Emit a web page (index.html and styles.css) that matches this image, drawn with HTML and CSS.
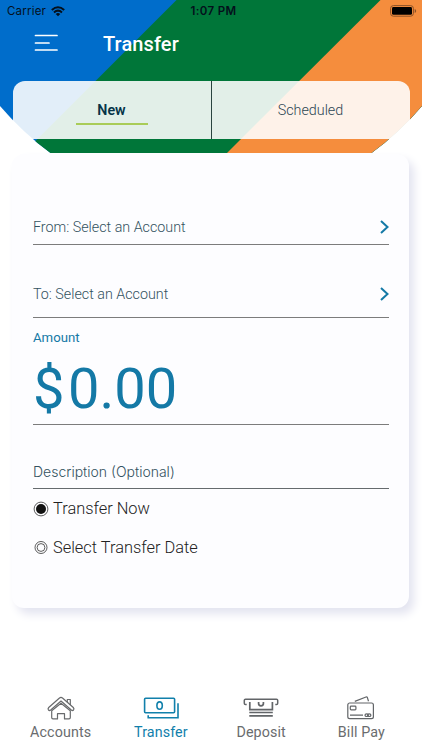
FILE: index.html
```html
<!DOCTYPE html>
<html lang="en">
<head>
<meta charset="utf-8">
<title>Transfer</title>
<link rel="stylesheet" href="styles.css">
</head>
<body>
<div class="app">
  <header class="header">
    <svg class="backdrop" width="422" height="153" viewBox="0 0 422 153">
      <clipPath id="curve"><path d="M0 0H422V106Q399 133 371.500 153H50.500Q23 133 0 106Z"/></clipPath>
      <g clip-path="url(#curve)">
        <path fill="#006dcb" d="M0 0H422V153H0Z"/>
        <path fill="#007639" d="M176.500 0H422V153H23.500Z"/>
        <path fill="#f58d3d" d="M380.500 0H422V153H227Z"/>
      </g>
    </svg>
    <div class="status">
      <div class="carrier"><span>Carrier</span>
        <svg width="14" height="11" viewBox="0 0 14 11" fill="none" stroke="#04101c" stroke-width="2"><path d="M.8 4Q7-1.600 13.200 4M3 6.400Q7 2.900 11 6.400"/><path d="M4.700 8Q7 6 9.300 8L7 10.300Z" fill="#04101c" stroke="none"/></svg>
      </div>
      <span class="time">1:07 PM</span>
      <svg class="battery" width="27" height="12" viewBox="0 0 27 12"><rect x=".6" y=".6" width="22.800" height="10.600" rx="2.800" fill="none" stroke="#8c5228"/><rect x="2" y="2" width="20" height="7.800" rx="1.400" fill="#000"/><path d="M24.700 4q1.500.4 1.500 2t-1.500 2z" fill="#8c5228"/></svg>
    </div>
    <div class="titlebar">
      <svg width="24" height="18" viewBox="0 0 24 18" stroke="#fff" stroke-width="1.700" stroke-linecap="round"><path d="M1.500 1.500H23M1.500 9H15M1.500 16H23"/></svg>
      <h1 class="title">Transfer</h1>
    </div>
    <nav class="tabs">
      <div class="tab tab-active"><span class="tab-label">New</span></div>
      <div class="tab"><span class="tab-label">Scheduled</span></div>
    </nav>
  </header>
  <main class="card">
    <div class="field from"><span>From: Select an Account</span><svg width="10" height="14" viewBox="0 0 10 14" fill="none" stroke="#1479a6" stroke-width="2"><path d="M2 1L8.500 7L2 13"/></svg></div>
    <div class="field to"><span>To: Select an Account</span><svg width="10" height="14" viewBox="0 0 10 14" fill="none" stroke="#1479a6" stroke-width="2"><path d="M2 1L8.500 7L2 13"/></svg></div>
    <div class="amount-label">Amount</div>
    <div class="amount"><span class="currency">$</span><span class="value">0.00</span></div>
    <div class="description">Description (Optional)</div>
    <div class="option"><svg width="16" height="16" viewBox="0 0 16 16"><circle cx="8" cy="8" r="6.900" fill="none" stroke="#333" stroke-width=".8"/><circle cx="8" cy="8" r="5" fill="#111"/></svg><span>Transfer Now</span></div>
    <div class="option option-date"><svg width="16" height="16" viewBox="0 0 16 16" fill="none" stroke="#333" stroke-width=".8"><circle cx="8" cy="7.500" r="6"/><circle cx="8" cy="7.500" r="3.900"/></svg><span>Select Transfer Date</span></div>
  </main>
  <footer class="nav">
    <div class="nav-item">
      <svg width="36" height="26" viewBox="0 0 36 26" fill="none" stroke="#686a6c" stroke-width="1.200" stroke-linejoin="round"><path d="M18 2.300Q18.800 2.300 19.500 3L30.300 12.500Q31.500 13.900 30.500 15Q29.500 16 28.300 15L18 6L7.700 15Q6.500 16 5.500 15Q4.500 13.900 5.700 12.500L16.500 3Q17.200 2.300 18 2.300Z"/><path d="M8.700 15.700L18 8.200L27.300 15.700V22.600Q27.300 23.900 26 23.900H21.500V18.700H14.500V23.900H10Q8.700 23.900 8.700 22.600Z"/><path d="M24.300 7.300V4.500H27.300V10"/></svg>
      <span>Accounts</span>
    </div>
    <div class="nav-item nav-active">
      <svg width="36" height="26" viewBox="0 0 36 26" fill="none" stroke="#1180ab" stroke-width="1.600"><rect x="1.600" y="3.300" width="30" height="14.500" rx="1"/><ellipse cx="16.600" cy="10.600" rx="2.700" ry="3.700"/><path d="M35 8.300V22.800H5.200V20.300"/></svg>
      <span>Transfer</span>
    </div>
    <div class="nav-item">
      <svg width="36" height="26" viewBox="0 0 36 26" fill="none" stroke="#626568" stroke-width="1.500"><path d="M3.700 9.500H2.500Q1.300 9.500 1.300 8.200V5.300Q1.300 4.200 2.500 4.200H33.500Q34.700 4.200 34.700 5.300V8.200Q34.700 9.500 33.500 9.500H32.300"/><path d="M6.800 7V14.700H29.400V7M15.600 7V8.500Q15.600 10.800 18 10.800T20.400 8.500V7M6.300 17.500H29.800M6.300 20.800H29.800" stroke-width="1.700"/></svg>
      <span>Deposit</span>
    </div>
    <div class="nav-item">
      <svg width="36" height="26" viewBox="0 0 36 26" fill="none" stroke="#626568" stroke-width="1.200"><rect x="4.800" y="8" width="25.600" height="15.600" rx="1.900"/><path d="M11.800 6.400L23 2Q24 1.700 24.400 2.600L25.500 6.200M7 20.200H20"/><rect x="7.300" y="11.200" width="5.600" height="3.600" rx=".8"/><ellipse cx="23.700" cy="20.200" rx="1.700" ry="1.300"/><ellipse cx="26.200" cy="20.200" rx="1.700" ry="1.300"/></svg>
      <span>Bill Pay</span>
    </div>
  </footer>
</div>
</body>
</html>
```
FILE: styles.css
```css
* { box-sizing: border-box; }
body { margin: 0; background: #fff; font-family: Roboto, "Liberation Sans", sans-serif; }
svg { display: block; flex: none; }
.app { width: 422px; height: 750px; display: flex; flex-direction: column; overflow: hidden; }
.header { height: 153.500px; position: relative; flex: none; isolation: isolate; }
.backdrop { position: absolute; inset: 0; z-index: -1; }
.status { height: 22px; display: grid; grid-template-columns: 1fr auto 1fr; align-items: center; padding: 0 5px 0 7px; color: #04101c; font-family: Inter, sans-serif; font-size: 11.5px; letter-spacing: .2px; }
.carrier { display: flex; align-items: center; gap: 5px; }
.time { font-weight: 600; font-size: 11.5px; letter-spacing: .35px; padding-left: 3px; }
.battery { justify-self: end; }
.titlebar { height: 58px; display: flex; align-items: center; padding: 0 0 16px 34px; gap: 45px; }
.title { margin: 0; color: #fff; font-size: 20px; line-height: 24px; font-weight: 500; letter-spacing: .1px; padding-top: 1px; }
.tabs { margin: .5px 12.500px 0 12.500px; height: 58px; display: flex; border-radius: 12px 12px 0 0; background: rgba(255,255,255,.885); }
.tab { flex: 1; display: flex; justify-content: center; padding-top: 20px; color: #2c4654; font-size: 14.300px; line-height: 18px; font-weight: 300; }
.tab + .tab { border-left: 1px solid #29443f; }
.tab-active { font-weight: 600; color: #063448; }
.tab-active .tab-label { width: 72px; height: 24.500px; text-align: center; border-bottom: 2px solid #a9cc58; }
.card { margin: 0 13px 0 12px; height: 454px; flex: none; padding: 40px 20px 0 21px; background: #fdfdff; border-radius: 12px; box-shadow: 5px 6px 10px #e3e4f0; color: #335260; }
.field { display: flex; justify-content: space-between; font-size: 14.300px; line-height: 18px; font-weight: 300; border-bottom: 1px solid #7c7c7c; }
.field svg { margin-top: 2px; }
.from { height: 51.500px; padding-top: 24px; }
.to { height: 73px; padding-top: 40px; }
.amount-label { height: 38.500px; padding-top: 10.500px; color: #1479a6; font-size: 13.200px; line-height: 18px; }
.amount { height: 68.500px; display: flex; color: #1479a6; font-size: 56px; line-height: 65px; border-bottom: 1px solid #7c7c7c; }
.currency { width: 35px; }
.description { height: 64px; padding-top: 38px; font-family: Inter, sans-serif; font-size: 14px; line-height: 18px; font-weight: 300; border-bottom: 1px solid #666b6e; }
.option { height: 39px; display: flex; align-items: center; gap: 4px; color: #222; font-size: 16.400px; line-height: 20px; font-weight: 300; }
.nav { margin-top: auto; height: 55.500px; display: flex; padding: 0 10.500px; }
.nav-item { flex: 1; display: flex; flex-direction: column; align-items: center; gap: 2px; color: #6a6c6e; font-size: 14.300px; line-height: 18px; letter-spacing: .1px; }
.nav-active { color: #1180ab; }
```
